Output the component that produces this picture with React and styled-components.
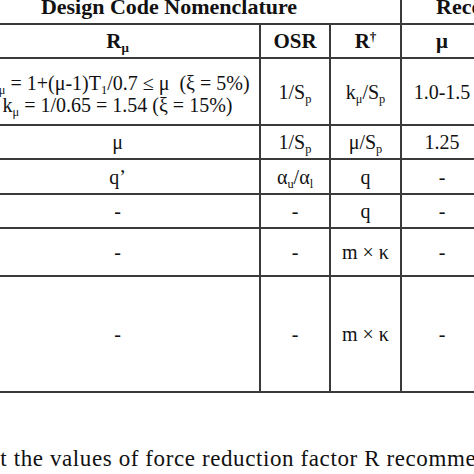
import React from "react";
import styled, { createGlobalStyle } from "styled-components";

const GlobalStyle = createGlobalStyle`
  body {
    margin: 0;
    background: #ffffff;
  }
`;

const Page = styled.div`
  width: 474px;
  height: 474px;
  overflow: hidden;
  background: #ffffff;
  color: #111111;
  font-family: "Liberation Serif", "Times New Roman", serif;
`;

const Table = styled.div`
  display: grid;
  grid-template-columns: 285px 70px 71px 82px 60px;
  grid-template-rows: 35px 34px 67px 34px 35px 34px 48px 116px;
  margin: -10px 0 0 -24px;
  width: max-content;
`;

const Cell = styled.div`
  grid-column: span ${(p) => p.$span || 1};
  box-sizing: border-box;
  border-right: 2px solid #3a3a3a;
  border-bottom: 2px solid #3a3a3a;
  display: flex;
  flex-direction: column;
  align-items: ${(p) => (p.$left ? "flex-start" : "center")};
  justify-content: center;
  padding: ${(p) => p.$pad || "0"};
  font-size: ${(p) => (p.$bold ? "21px" : "20px")};
  font-weight: ${(p) => (p.$bold ? 700 : 400)};
  line-height: 1;
  white-space: pre;
`;

const Title = styled(Cell)`
  font-size: 22px;
`;

const Line = styled.div`
  line-height: 22px;
`;

const Sub = styled.sub`
  font-size: 0.62em;
  vertical-align: -0.3em;
  line-height: 0;
`;

const Sup = styled.sup`
  font-size: 0.62em;
  vertical-align: 0.55em;
  line-height: 0;
`;

const Caption = styled.p`
  margin: 54px 0 0 -83px;
  font-size: 23px;
  letter-spacing: 0.6px;
  line-height: 1;
  white-space: nowrap;
`;

const rows = [
  [<>μ</>, <>1/S<Sub>p</Sub></>, <>μ/S<Sub>p</Sub></>, <>1.25</>],
  [<>q’</>, <>α<Sub>u</Sub>/α<Sub>l</Sub></>, <>q</>, <>-</>],
  [<>-</>, <>-</>, <>q</>, <>-</>],
  [<>-</>, <>-</>, <>m × κ</>, <>-</>],
  [<>-</>, <>-</>, <>m × κ</>, <>-</>],
];

export default function App() {
  return (
    <Page>
      <GlobalStyle />
      <Table>
        <Title $bold $span={3} $pad="0 38px 0 0">
          Design Code Nomenclature
        </Title>
        <Title $bold $span={2} $left $pad="0 0 0 34px">
          Recommended Values
        </Title>

        <Cell $bold>
          <span>
            R<Sub>μ</Sub>
          </span>
        </Cell>
        <Cell $bold>OSR</Cell>
        <Cell $bold>
          <span>
            R<Sup>†</Sup>
          </span>
        </Cell>
        <Cell $bold>μ</Cell>
        <Cell $bold>R</Cell>

        <Cell $pad="4px 0 0 0">
          <Line>
            R<Sub>μ</Sub> = 1+(μ-1)T<Sub>1</Sub>/0.7 ≤ μ  (ξ = 5%)
          </Line>
          <Line>
            k<Sub>μ</Sub> = 1/0.65 = 1.54 (ξ = 15%)
          </Line>
        </Cell>
        <Cell>
          <span>
            1/S<Sub>p</Sub>
          </span>
        </Cell>
        <Cell>
          <span>
            k<Sub>μ</Sub>/S<Sub>p</Sub>
          </span>
        </Cell>
        <Cell>1.0-1.5</Cell>
        <Cell>-</Cell>

        {rows.map((row, i) => (
          <React.Fragment key={i}>
            {row.map((content, j) => (
              <Cell key={j}>
                <span>{content}</span>
              </Cell>
            ))}
            <Cell>-</Cell>
          </React.Fragment>
        ))}
      </Table>
      <Caption>
        Note that the values of force reduction factor R recommended by the codes
      </Caption>
    </Page>
  );
}
